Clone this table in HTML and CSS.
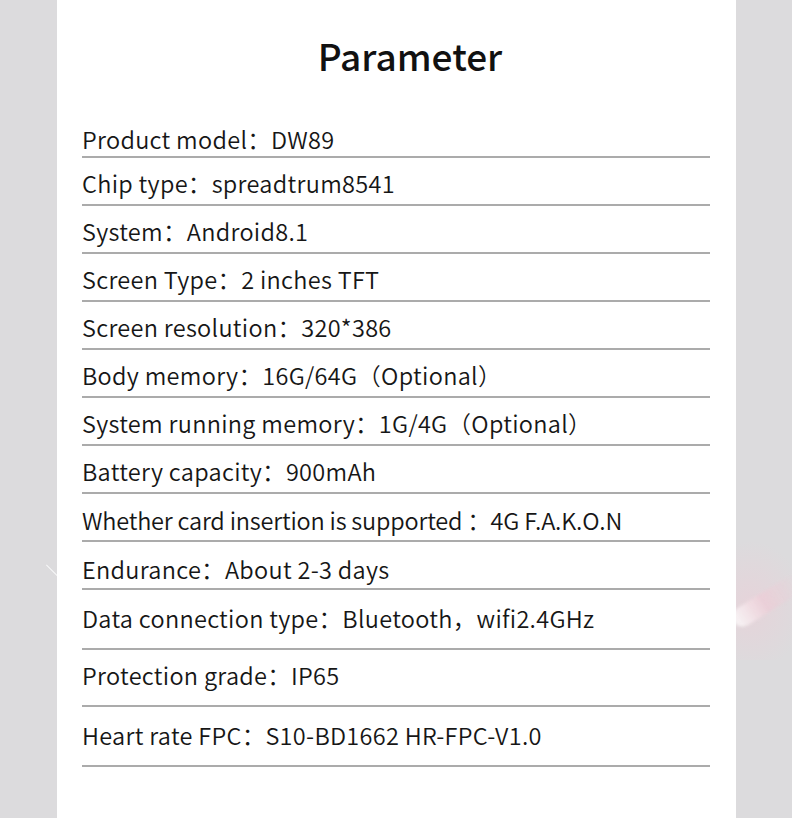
FILE: index.html
```html
<!DOCTYPE html>
<html>
<head>
<meta charset="utf-8">
<link rel="stylesheet" href="styles.css">
</head>
<body>
<div class="page">
  <div class="glow"></div>
  <div class="streak streak-right"></div>
  <div class="streak streak-left"></div>
  <div class="card">
    <h1 class="title">Parameter</h1>
    <div class="list">
      <div class="row"><span>Product model：DW89</span></div>
      <div class="row"><span>Chip type：spreadtrum8541</span></div>
      <div class="row"><span>System：Android8.1</span></div>
      <div class="row"><span>Screen Type：2 inches TFT</span></div>
      <div class="row"><span>Screen resolution：320*386</span></div>
      <div class="row"><span>Body memory：16G/64G（Optional）</span></div>
      <div class="row"><span>System running memory：1G/4G（Optional）</span></div>
      <div class="row"><span>Battery capacity：900mAh</span></div>
      <div class="row narrow"><span>Whether card insertion is supported ：4G F.A.K.O.N</span></div>
      <div class="row"><span>Endurance：About 2-3 days</span></div>
      <div class="row tall"><span>Data connection type：Bluetooth，wifi2.4GHz</span></div>
      <div class="row mid"><span>Protection grade：IP65</span></div>
      <div class="row tall"><span>Heart rate FPC：S10-BD1662 HR-FPC-V1.0</span></div>
    </div>
  </div>
</div>
</body>
</html>
```
FILE: styles.css
```css
html, body {
  margin: 0;
  padding: 0;
}
body {
  background: #dcdbdd;
  font-family: "Noto Sans CJK SC", "Noto Sans", sans-serif;
  color: #161616;
}
.page {
  position: relative;
  width: 792px;
  height: 818px;
  overflow: hidden;
}
.card {
  margin-left: 57px;
  width: 679px;
  height: 818px;
  background: #ffffff;
  position: relative;
}
.title {
  margin: 0;
  padding: 30px 0 0 27px;
  height: 74px;
  box-sizing: border-box;
  text-align: center;
  font-size: 37px;
  font-weight: 500;
  line-height: 50px;
  color: #111;
}
.list {
  margin: 36px 26px 0 25px;
}
.row {
  height: 48px;
  box-sizing: border-box;
  border-bottom: 2px solid #ababab;
  display: flex;
  align-items: flex-end;
  font-size: 23.5px;
  font-weight: 350;
  letter-spacing: 0.3px;
  line-height: 30px;
  padding-bottom: 6px;
  white-space: nowrap;
}
.row:nth-child(1) {
  padding-bottom: 2px;
}
.row:nth-child(9) {
  padding-bottom: 5px;
}
.row:nth-child(10) {
  padding-bottom: 4px;
}
.row.narrow {
  letter-spacing: -0.2px;
}
.row.tall {
  height: 60px;
  padding-bottom: 15px;
}
.row.mid {
  height: 57px;
  padding-bottom: 15px;
}
.glow {
  position: absolute;
  left: 736px;
  top: 540px;
  width: 70px;
  height: 120px;
  background: radial-gradient(ellipse at 20% 55%, rgba(238,205,215,0.55), rgba(220,219,221,0) 70%);
}
.streak {
  position: absolute;
  pointer-events: none;
}
.streak-right {
  left: 734px;
  top: 612px;
  width: 80px;
  height: 20px;
  transform: rotate(-32deg);
  transform-origin: left center;
  background: linear-gradient(90deg, rgba(255,255,255,0.75), rgba(242,200,212,0.45) 45%, rgba(230,205,212,0));
  border-radius: 10px;
  filter: blur(1.5px);
}
.streak-left {
  left: 44px;
  top: 570px;
  width: 16px;
  height: 1px;
  transform: rotate(45deg);
  background: rgba(255,255,255,0.8);
}
```
